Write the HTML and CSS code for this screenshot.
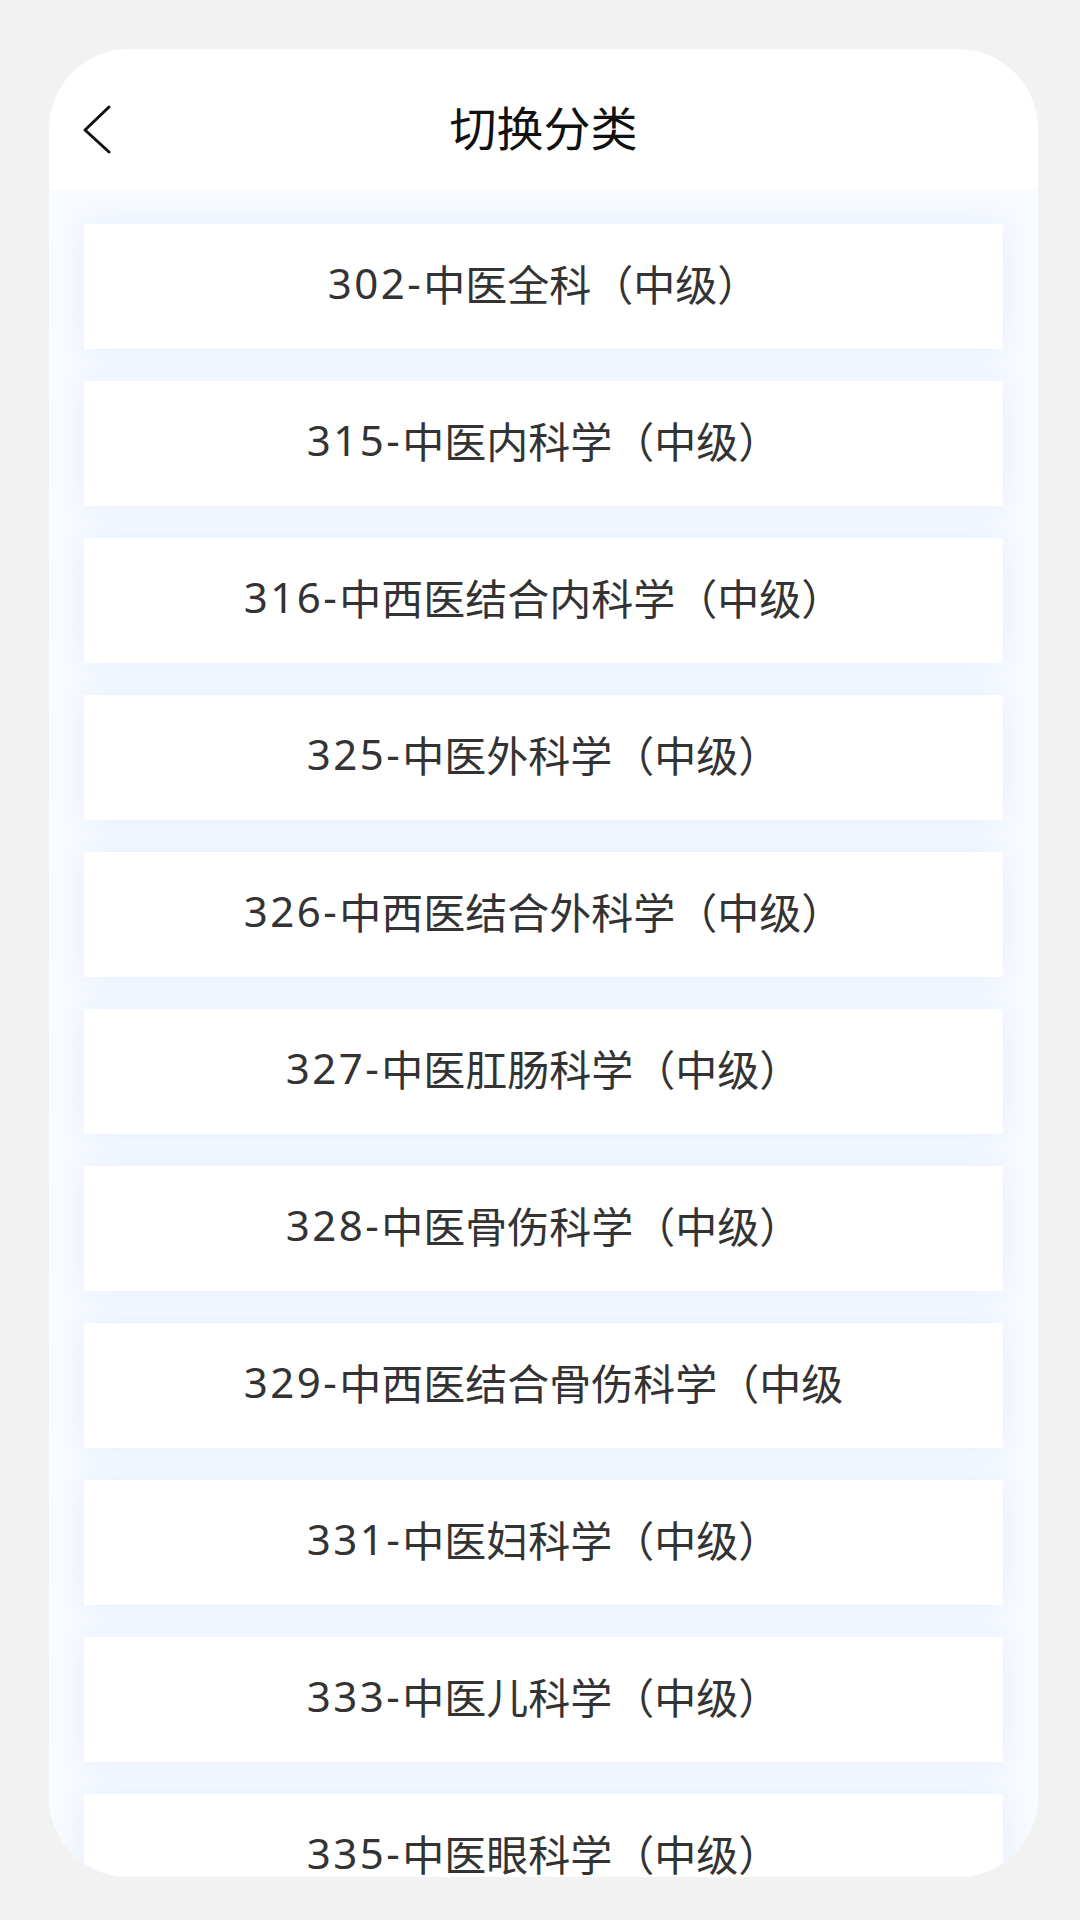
FILE: index.html
```html
<!DOCTYPE html>
<html lang="zh-CN">
<head>
<meta charset="UTF-8" />
<meta name="viewport" content="width=device-width, initial-scale=1" />
<title>切换分类</title>
<link rel="stylesheet" href="styles.css">
</head>
<body>
<div class="sheet">
  <div class="header">
    <span class="back">
      <svg width="30" height="50" viewBox="0 0 30 50"><path d="M27 3 L3 26 L27 48" fill="none" stroke="#111" stroke-width="3" stroke-linecap="round" stroke-linejoin="round"/></svg>
    </span>
    <h1>切换分类</h1>
    <span></span>
  </div>
  <div class="list">
    <div class="item"><span class="code">302-</span>中医全科（中级）</div>
    <div class="item"><span class="code">315-</span>中医内科学（中级）</div>
    <div class="item"><span class="code">316-</span>中西医结合内科学（中级）</div>
    <div class="item"><span class="code">325-</span>中医外科学（中级）</div>
    <div class="item"><span class="code">326-</span>中西医结合外科学（中级）</div>
    <div class="item"><span class="code">327-</span>中医肛肠科学（中级）</div>
    <div class="item"><span class="code">328-</span>中医骨伤科学（中级）</div>
    <div class="item"><span class="code">329-</span>中西医结合骨伤科学（中级</div>
    <div class="item"><span class="code">331-</span>中医妇科学（中级）</div>
    <div class="item"><span class="code">333-</span>中医儿科学（中级）</div>
    <div class="item"><span class="code">335-</span>中医眼科学（中级）</div>
  </div>
</div>
</body>
</html>
```

FILE: styles.css
```css
body { margin: 0; background: #f2f2f2; font-family: "Noto Sans", "Noto Sans CJK SC", sans-serif; }
.sheet { margin: 49px 0 0 49px; width: 989px; height: 1828px; border-radius: 80px; overflow: hidden; background: #fff; display: flex; flex-direction: column; }
.header { height: 141px; flex: none; box-sizing: border-box; padding: 12px 33px 0; display: grid; grid-template-columns: 1fr auto 1fr; align-items: center; }
.back { display: flex; align-items: center; padding-top: 6px; }
.header h1 { margin: 0; font-family: "Noto Sans CJK SC", sans-serif; font-size: 47px; font-weight: 400; color: #111; line-height: 1; }
.list { flex: 1; background: #f8fbff; padding: 34px 35px; display: flex; flex-direction: column; gap: 32px; }
.item { flex: none; height: 125px; box-sizing: border-box; padding-bottom: 8px; background: #fff; box-shadow: 0 0 30px rgba(205, 222, 248, 0.45); display: flex; align-items: center; justify-content: center; font-size: 42px; color: #333; white-space: nowrap; }
.code { letter-spacing: 2.5px; }
```
